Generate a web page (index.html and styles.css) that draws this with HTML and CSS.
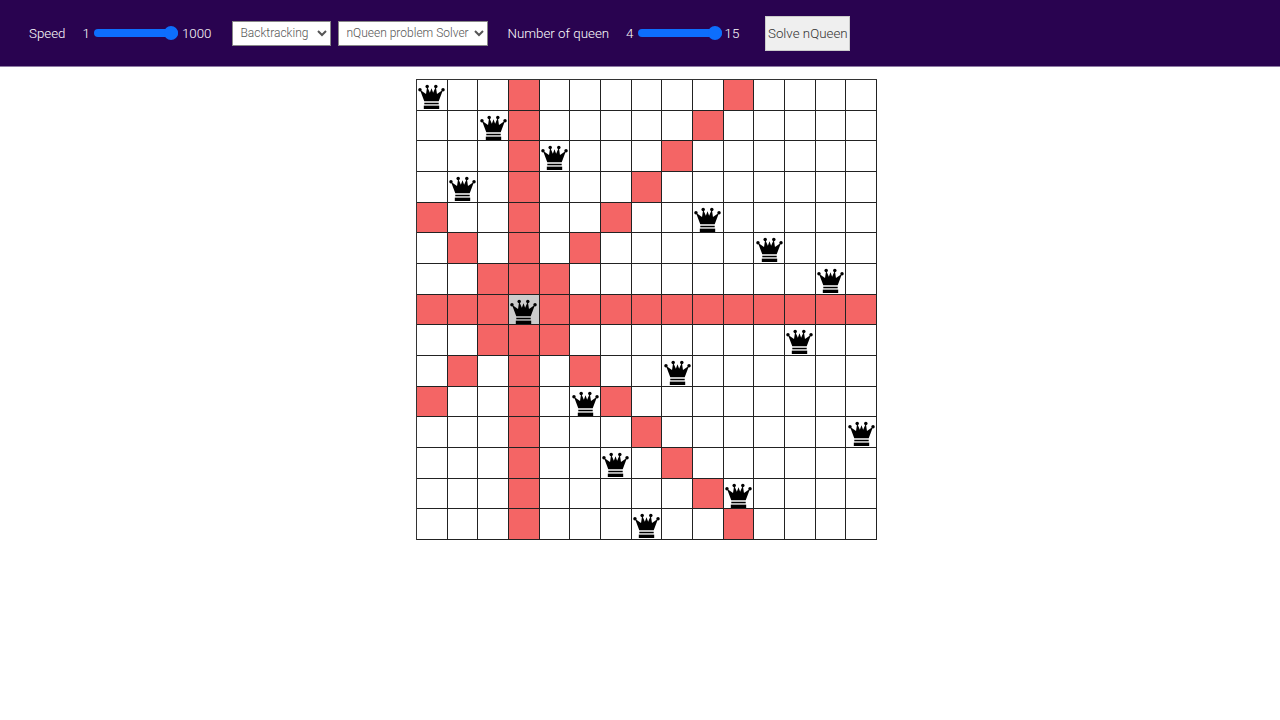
FILE: index.html
```html
<!DOCTYPE html>
<html lang="en">
<head>
  <meta charset="UTF-8" />
  <title>nQueen Visualizer</title>
  <link rel="stylesheet" href="styles.css">
</head>
<body>
  <svg class="icon-defs" aria-hidden="true">
    <symbol id="queen" viewBox="0 0 28 26">
      <circle cx="2" cy="6" r="1.8" />
      <circle cx="9.5" cy="2.5" r="1.8" />
      <circle cx="18.5" cy="2.5" r="1.8" />
      <circle cx="26" cy="6" r="1.8" />
      <path d="M6.5 18 2 6 8.3 10.5 9.5 2.5 12.3 9 14 4.5 15.7 9 18.5 2.5 19.7 10.5 26 6 21.5 18Z" />
      <rect x="6.5" y="19.5" width="15" height="1.6" />
      <rect x="6" y="22.5" width="16" height="3.5" />
    </symbol>
  </svg>

  <nav class="navbar">
    <div class="range-group speed">
      <label class="range-title">Speed</label>
      <span class="range-min">1</span>
      <input type="range" class="slider" min="1" max="1000" value="1000">
      <span class="range-max">1000</span>
    </div>
    <select class="picker picker-algo">
      <option>Backtracking</option>
    </select>
    <select class="picker picker-problem">
      <option>nQueen problem Solver</option>
    </select>
    <div class="range-group queens">
      <label class="range-title">Number of queen</label>
      <span class="range-min">4</span>
      <input type="range" class="slider" min="4" max="15" value="15">
      <span class="range-max">15</span>
    </div>
    <button class="solve">Solve nQueen</button>
  </nav>

  <main class="content">
    <div class="board" id="board"></div>
  </main>

  <script src="script.js"></script>
</body>
</html>
```

FILE: styles.css
```css
body {
  margin: 0;
  background-color: #fff;
  font-family: Roboto, sans-serif;
  font-weight: 300;
  font-size: 13.33px;
}

.icon-defs {
  display: none;
}

.navbar {
  display: flex;
  align-items: center;
  height: 66px;
  padding-left: 29px;
  background-color: #290350;
  border-bottom: 1px solid #8d7aa3;
  color: #fff;
}

.range-group {
  display: flex;
  align-items: center;
}

.range-title {
  margin-right: 17px;
}

.queens {
  margin-left: 19px;
}

.slider {
  -webkit-appearance: none;
  appearance: none;
  width: 84px;
  height: 14px;
  margin: 0 4px;
  background: transparent;
}

.queens .slider {
  margin-right: 3px;
}

.slider::-webkit-slider-runnable-track {
  height: 8px;
  border-radius: 4px;
  background-color: #0d6efd;
}

.slider::-webkit-slider-thumb {
  -webkit-appearance: none;
  width: 14px;
  height: 14px;
  margin-top: -3px;
  border-radius: 50%;
  background-color: #0d6efd;
}

.picker {
  height: 25px;
  padding: 0 0 0 3px;
  border: 1px solid #888;
  border-radius: 0;
  background-color: #fff;
  color: #555;
  font-family: inherit;
  font-weight: 300;
  font-size: 12px;
}

.picker-algo {
  width: 99px;
  margin-left: 21px;
}

.picker-problem {
  width: 150px;
  margin-left: 7px;
}

.solve {
  width: 85px;
  height: 35px;
  margin-top: 1px;
  margin-left: 26px;
  padding: 0;
  border: 1px solid #ccc;
  background-color: #efefef;
  color: #333;
  font-family: inherit;
  font-weight: 300;
  font-size: 13.33px;
  white-space: nowrap;
}

.content {
  padding: 12px 0 0 416px;
}

.board {
  display: grid;
  grid-template-columns: repeat(15, 1fr);
  grid-auto-rows: 30.67px;
  width: 460px;
  border-top: 1px solid #333;
  border-left: 1px solid #333;
}

.cell {
  display: flex;
  justify-content: center;
  padding-top: 4px;
  box-sizing: border-box;
  border-right: 1px solid #222;
  border-bottom: 1px solid #222;
  overflow: hidden;
}

.cell.attacked {
  background-color: #f46565;
}

.cell.current {
  background-color: #ccc;
}

.queen {
  width: 27px;
  height: 25px;
  fill: #000;
}
```

FILE: script.js
```js
const board = document.getElementById('board');
const size = 15;

// column of the queen on every row
const queens = [0, 2, 4, 1, 9, 11, 13, 3, 12, 8, 5, 14, 6, 10, 7];
const currentRow = 7;
const currentCol = 3;

function isAttacked(row, col) {
  if (row === currentRow || col === currentCol) return true;
  return Math.abs(row - currentRow) === Math.abs(col - currentCol);
}

for (let row = 0; row < size; row++) {
  for (let col = 0; col < size; col++) {
    const cell = document.createElement('div');
    cell.className = 'cell';
    if (row === currentRow && col === currentCol) {
      cell.classList.add('current');
    } else if (isAttacked(row, col)) {
      cell.classList.add('attacked');
    }
    if (queens[row] === col) {
      cell.innerHTML = '<svg class="queen"><use href="#queen"></use></svg>';
    }
    board.appendChild(cell);
  }
}
```
